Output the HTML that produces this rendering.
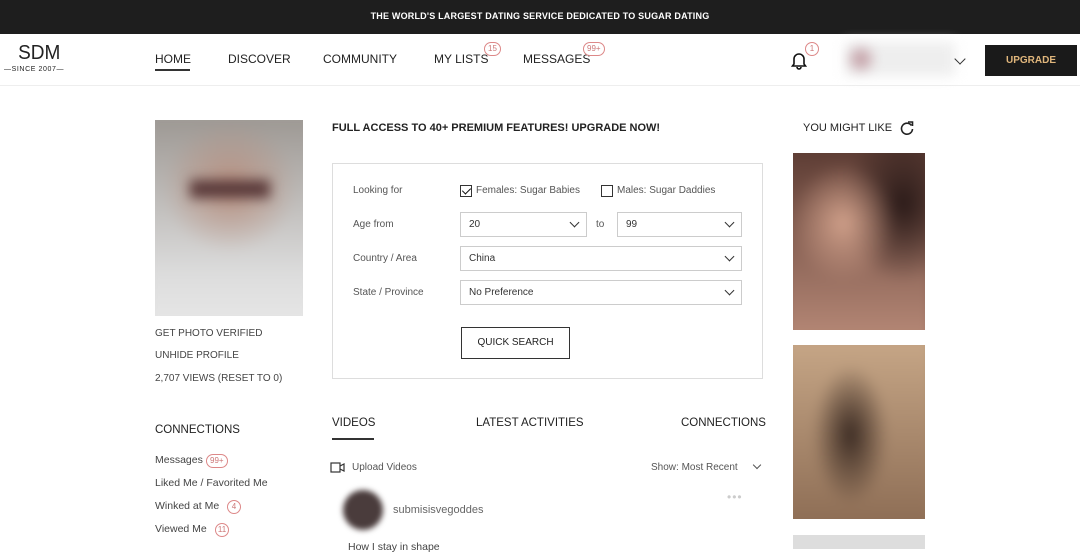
<!DOCTYPE html>
<html><head><meta charset="utf-8">
<style>
*{margin:0;padding:0;box-sizing:border-box}
body{width:1080px;height:549px;overflow:hidden;background:#fff;font-family:"Liberation Sans",sans-serif;color:#222;position:relative}
.a{position:absolute}
.top{left:0;top:0;width:1080px;height:34px;background:#1e1e1e;color:#fff;font-size:9px;font-weight:bold;text-align:center;line-height:33px;letter-spacing:.2px}
.hdr{left:0;top:34px;width:1080px;height:52px;background:#fff;border-bottom:1px solid #eee}
.nav{font-size:12px;color:#222;top:52px}
.badge{border:1px solid #d88;color:#c77;border-radius:9px;font-size:8px;line-height:12px;min-width:14px;text-align:center;padding:0 3px;background:#fff}
.t11{font-size:10.5px;color:#444}
.lbl{font-size:10px;color:#555}
.sel{border:1px solid #ccc;height:25px;font-size:10px;color:#333;line-height:23px;padding-left:8px}
.chev{position:absolute;right:8px;top:6px;width:7px;height:7px;border-right:1.3px solid #333;border-bottom:1.3px solid #333;transform:rotate(45deg)}
.blur{filter:blur(6px)}
</style></head><body>
<div class="a top">THE WORLD'S LARGEST DATING SERVICE DEDICATED TO SUGAR DATING</div>
<div class="a hdr"></div>
<div class="a" style="left:17px;top:42px;font-size:20px;letter-spacing:0;transform:scaleX(0.95)">SDM</div>
<div class="a" style="left:4px;top:66px;font-size:7px;letter-spacing:.6px">—SINCE 2007—</div>
<div class="a nav" style="left:155px">HOME</div>
<div class="a" style="left:155px;top:69px;width:35px;height:2px;background:#333"></div>
<div class="a nav" style="left:228px">DISCOVER</div>
<div class="a nav" style="left:323px">COMMUNITY</div>
<div class="a nav" style="left:434px">MY LISTS</div>
<div class="a badge" style="left:484px;top:42px">15</div>
<div class="a nav" style="left:523px">MESSAGES</div>
<div class="a badge" style="left:583px;top:42px">99+</div>
<svg class="a" style="left:790px;top:50px" width="18" height="20" viewBox="0 0 18 20"><path d="M4 14V9a5 5 0 0 1 10 0v5l1.5 2h-13z M7 17a2 2 0 0 0 4 0" fill="none" stroke="#111" stroke-width="1.6"/></svg>
<div class="a badge" style="left:805px;top:42px;border-radius:50%;padding:0">1</div>
<div class="a blur" style="left:845px;top:42px;width:110px;height:34px;background:#eee"></div>
<div class="a blur" style="left:850px;top:48px;width:22px;height:22px;border-radius:50%;background:#c8a8ae"></div>
<div class="a" style="left:956px;top:55px;width:8px;height:8px;border-right:1.4px solid #333;border-bottom:1.4px solid #333;transform:rotate(45deg)"></div>
<div class="a" style="left:985px;top:45px;width:92px;height:31px;background:#1a1a1a;color:#e0b67c;font-size:10px;font-weight:bold;text-align:center;line-height:31px">UPGRADE</div>

<div class="a" style="left:155px;top:120px;width:148px;height:196px;background:#bbb;overflow:hidden"><div class="blur" style="position:absolute;left:-10px;top:-10px;width:170px;height:220px;background:radial-gradient(ellipse 40% 30% at 50% 35%,#b89080,transparent),linear-gradient(#9a9590,#ddd 75%,#e8e8e8)"></div><div class="blur" style="position:absolute;left:35px;top:60px;width:80px;height:18px;background:#5a3a3a"></div></div>
<div class="a t11" style="left:155px;top:328px;font-size:10px">GET PHOTO VERIFIED</div>
<div class="a t11" style="left:155px;top:350px;font-size:10px">UNHIDE PROFILE</div>
<div class="a t11" style="left:155px;top:373px;font-size:10px">2,707 VIEWS (RESET TO 0)</div>
<div class="a" style="left:155px;top:424px;font-size:11.5px;color:#222">CONNECTIONS</div>
<div class="a t11" style="left:155px;top:454px">Messages</div><div class="a badge" style="left:206px;top:454px">99+</div>
<div class="a t11" style="left:155px;top:477px">Liked Me / Favorited Me</div>
<div class="a t11" style="left:155px;top:500px">Winked at Me</div><div class="a badge" style="left:227px;top:500px;padding:0">4</div>
<div class="a t11" style="left:155px;top:523px">Viewed Me</div><div class="a badge" style="left:215px;top:523px;padding:0">11</div>

<div class="a" style="left:332px;top:122px;font-size:11px;font-weight:bold">FULL ACCESS TO 40+ PREMIUM FEATURES! UPGRADE NOW!</div>
<div class="a" style="left:332px;top:163px;width:431px;height:216px;border:1px solid #ddd"></div>
<div class="a lbl" style="left:353px;top:185px">Looking for</div>
<div class="a" style="left:460px;top:185px;width:12px;height:12px;border:1px solid #333"></div>
<div class="a" style="left:464px;top:186px;width:5px;height:8px;border-right:1.5px solid #111;border-bottom:1.5px solid #111;transform:rotate(45deg)"></div>
<div class="a lbl" style="left:476px;top:185px">Females: Sugar Babies</div>
<div class="a" style="left:601px;top:185px;width:12px;height:12px;border:1px solid #333"></div>
<div class="a lbl" style="left:617px;top:185px">Males: Sugar Daddies</div>
<div class="a lbl" style="left:353px;top:219px">Age from</div>
<div class="a sel" style="left:460px;top:212px;width:127px">20<div class="chev"></div></div>
<div class="a lbl" style="left:596px;top:219px">to</div>
<div class="a sel" style="left:617px;top:212px;width:125px">99<div class="chev"></div></div>
<div class="a lbl" style="left:353px;top:253px">Country / Area</div>
<div class="a sel" style="left:460px;top:246px;width:282px">China<div class="chev"></div></div>
<div class="a lbl" style="left:353px;top:287px">State / Province</div>
<div class="a sel" style="left:460px;top:280px;width:282px">No Preference<div class="chev"></div></div>
<div class="a" style="left:461px;top:327px;width:109px;height:32px;border:1px solid #333;font-size:10px;text-align:center;line-height:30px">QUICK SEARCH</div>

<div class="a" style="left:332px;top:417px;font-size:11.5px">VIDEOS</div>
<div class="a" style="left:332px;top:438px;width:42px;height:1.5px;background:#333"></div>
<div class="a" style="left:476px;top:417px;font-size:11.5px">LATEST ACTIVITIES</div>
<div class="a" style="left:681px;top:417px;font-size:11.5px">CONNECTIONS</div>
<svg class="a" style="left:330px;top:462px" width="15" height="11"><rect x="1" y="1" width="9" height="9" fill="none" stroke="#333" stroke-width="1.2"/><path d="M10 4l4-2v7l-4-2" fill="none" stroke="#333" stroke-width="1.2"/></svg>
<div class="a lbl" style="left:352px;top:462px">Upload Videos</div>
<div class="a lbl" style="left:651px;top:462px">Show: Most Recent</div>
<div class="a" style="left:754px;top:462px;width:6px;height:6px;border-right:1px solid #555;border-bottom:1px solid #555;transform:rotate(45deg)"></div>
<div class="a" style="left:727px;top:490px;font-size:12px;color:#ccc;letter-spacing:1px">•••</div>
<div class="a blur" style="left:343px;top:490px;width:40px;height:40px;border-radius:50%;background:#4a3c3c;filter:blur(3px)"></div>
<div class="a" style="left:393px;top:504px;font-size:11px;color:#666">submisisvegoddes</div>
<div class="a" style="left:348px;top:541px;font-size:10.5px;color:#444">How I stay in shape</div>

<div class="a" style="left:803px;top:122px;font-size:11px">YOU MIGHT LIKE</div>
<svg class="a" style="left:899px;top:120px" width="16" height="16" viewBox="0 0 16 16"><path d="M12.5 5.5A5.5 5.5 0 1 0 13.5 9" fill="none" stroke="#222" stroke-width="1.6"/><path d="M9 2h4.5v4" fill="none" stroke="#222" stroke-width="1.6"/></svg>
<div class="a" style="left:793px;top:153px;width:132px;height:177px;background:#6a4a40;overflow:hidden"><div class="blur" style="position:absolute;left:-10px;top:-10px;width:150px;height:200px;background:radial-gradient(ellipse 35% 30% at 40% 40%,#d0a08a,transparent),radial-gradient(ellipse 40% 40% at 80% 30%,#2a1a18,transparent),linear-gradient(#5a3a32,#b88a78)"></div></div>
<div class="a" style="left:793px;top:345px;width:132px;height:174px;background:#9a7a60;overflow:hidden"><div class="blur" style="position:absolute;left:-10px;top:-10px;width:150px;height:200px;background:radial-gradient(ellipse 25% 35% at 45% 50%,#3a2a22,transparent),linear-gradient(#c8a888,#8a6a52)"></div></div>
<div class="a" style="left:793px;top:535px;width:132px;height:14px;background:#ddd"></div>
</body></html>
